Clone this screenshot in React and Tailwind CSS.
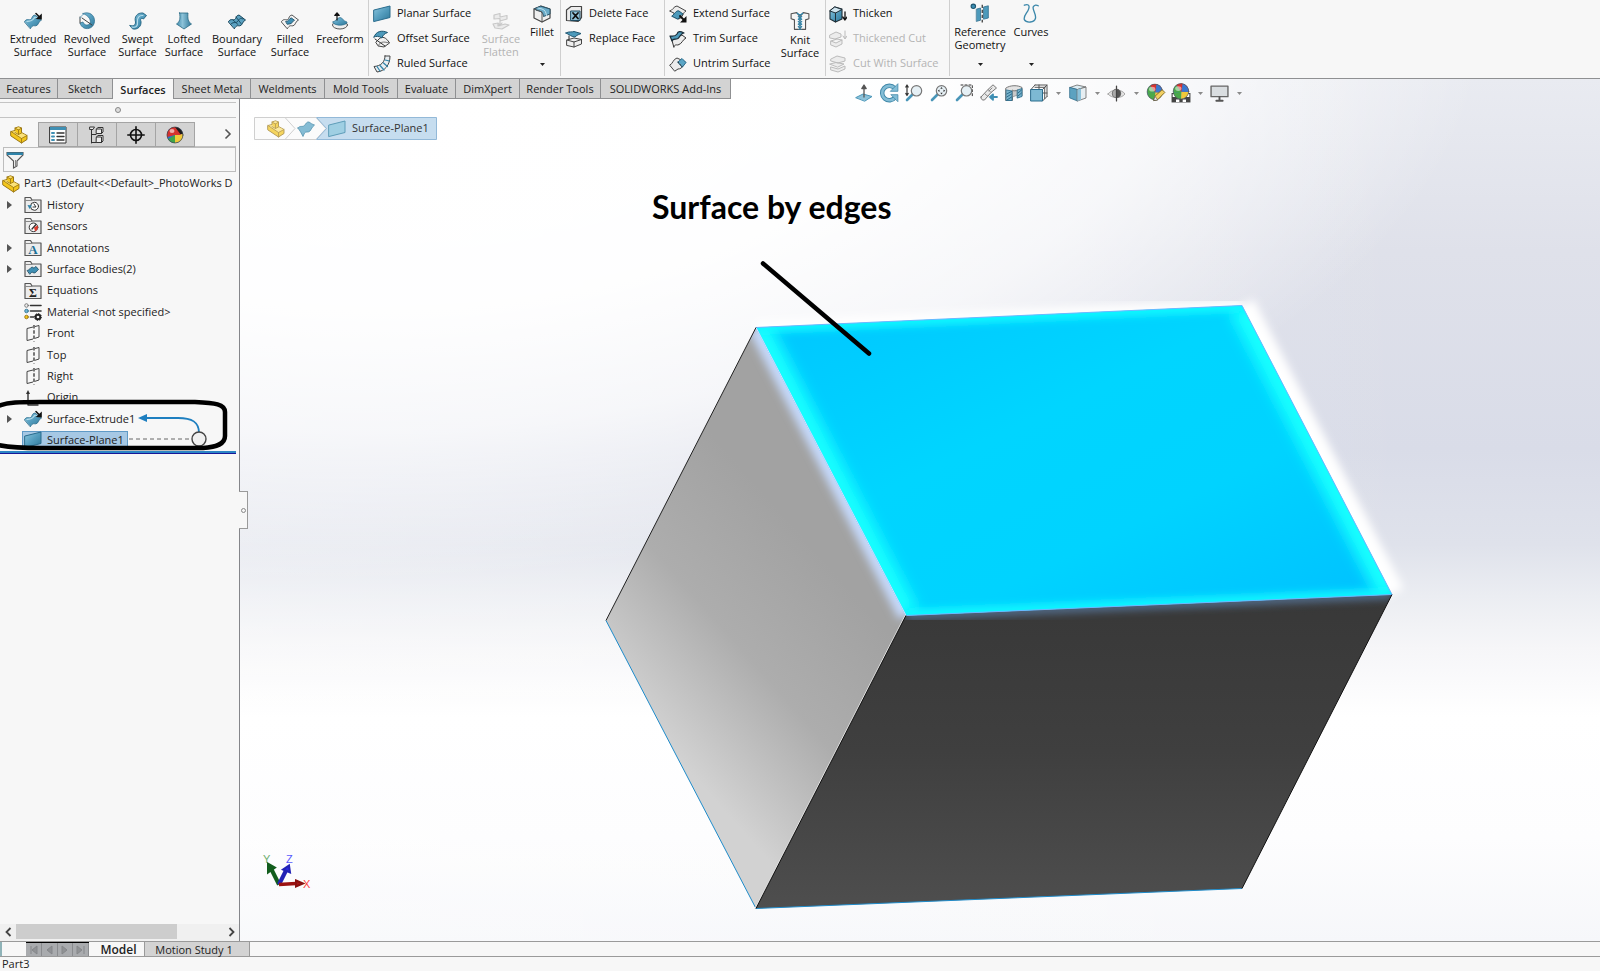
import React from "react";

const Svg = ({ s = 18, children, className = "" }) => (
  <svg
    viewBox="0 0 18 18"
    width={s}
    height={s}
    fill="none"
    strokeLinejoin="round"
    strokeLinecap="round"
    className={"shrink-0 " + className}
    aria-hidden="true"
  >
    {children}
  </svg>
);

const WAVE = "M0.500 9.500 C3 6 4.500 8.500 6.500 7.500 S8 3 11 3 L17.500 8 C14.500 9 14.500 13.500 12 13.800 S9 12.500 6.500 16.500 Z";

const ExtrudedIcon = ({ s }) => (
  <Svg s={s}>
    <path d={WAVE} fill="url(#blue)" stroke="#2a6c8d" strokeWidth="0.800" />
    <path d="M3 9.500 C5 8.500 7 10 9 7.500 S11 5 12.500 5.500" stroke="#b5dcea" strokeWidth="1.200" />
    <path d="M12 1.500 L15 4.500" stroke="#111" strokeWidth="1.600" />
    <path d="M17.800 1.500 V7.500 L11.800 7 Z" fill="#111" />
  </Svg>
);
const RevolvedIcon = () => (
  <Svg>
    <path d="M5 1.500 C11 -1 17 3 16.500 9.500 C16 15 11 18 6 16 C4 15 2.500 13 2 11 L5 10 C6 13 9 14 11.500 12 C14 9 11 3.500 5 1.500 Z" fill="url(#blue)" stroke="#2a6c8d" strokeWidth="0.700" />
    <path d="M2 11 V5 M4 6 L14 13" stroke="#444" strokeWidth="1" />
    <path d="M2 6 C3 4 4 3 6 2" stroke="#6ba3bf" />
  </Svg>
);
const SweptIcon = () => (
  <Svg>
    <path d="M1 13.500 C5 14.500 6.500 13 6.500 10 C5 5 8 0.500 14 1 L17.500 3.500 L14.500 7 C12 5.500 11 7 12 9.500 C12.500 14 9 18 4 17 Z" fill="url(#blue)" stroke="#1f617f" strokeWidth="0.900" />
    <path d="M3 15 C7 16 9 14 8.500 10 C8 6 10 3 14 3.500" stroke="#b5dcea" strokeWidth="1.100" />
  </Svg>
);
const LoftedIcon = () => (
  <Svg>
    <path d="M4.500 1 H13 C12.500 6 13 10 16.500 12 L9 17 L1.500 12 C5 10 5.500 6 4.500 1 Z" fill="url(#blueH)" stroke="#276883" strokeWidth="0.800" />
  </Svg>
);
const BoundaryIcon = () => (
  <Svg>
    <path d={WAVE} fill="#5ba1c0" stroke="#17465c" strokeWidth="1" />
    <path d="M3 12 C6 9 8 12 10 9 S12 6 15 7 M5 8 L10 12.500 M8 5 L13 11.500" stroke="#17465c" strokeWidth="0.900" />
  </Svg>
);
const FilledIcon = () => (
  <Svg>
    <path d={WAVE} fill="#f4f4f4" stroke="#555" strokeWidth="1" />
    <path d="M5 9.500 C8 9.500 8 6 10.500 6 L13.500 8.300 C11 9 11.500 11.800 9 11.800 L6.500 12.200 Z" fill="#3f8fb3" stroke="#1d5069" strokeWidth="0.900" />
  </Svg>
);
const FreeformIcon = () => (
  <Svg>
    <ellipse cx="9" cy="13" rx="7.500" ry="4" fill="#eee" stroke="#555" />
    <path d="M2 10 C5 9 6 6 9 5.500 C12 6 12 9 16 10 C16.500 14 2 14.500 2 10 Z" fill="url(#blue)" stroke="#2a6c8d" strokeWidth="0.700" />
    <path d="M6 8 V2 M3.800 3.500 L6 0.800 L8.200 3.500 Z" stroke="#111" strokeWidth="1.200" fill="#111" />
  </Svg>
);
const PlaneIcon = ({ s, light }) => (
  <Svg s={s}>
    <path d="M1 5 L17 1 V12.500 L1 16.500 Z" fill={light ? "#9fcfe3" : "url(#blue)"} stroke={light ? "#5e9db8" : "#2a6c8d"} strokeWidth="1" />
  </Svg>
);
const OffsetIcon = () => (
  <Svg>
    <path d="M3 12 L6 9 C9 6 13 7 16.500 13 L11 17 L5.500 16 Z" fill="#f2f2f2" stroke="#444" />
    <path d="M5.500 16 C6 12 10 11 16 13" stroke="#777" />
    <path d="M1 7 C3 1 9 0 14.500 2.500 C12 3.500 9.500 5 9 8 C6 6 3 6 1 7 Z" fill="#4d9abb" stroke="#1d5570" />
    <path d="M2 9 L12 16" stroke="#333" />
  </Svg>
);
const RuledIcon = () => (
  <Svg>
    <path d="M12 1 H17 C17 10 12 16 4 17 L1 11.500 C8 11 12 7 12 1 Z" fill="#e8eef2" stroke="#444" />
    <path d="M12 5 L16.500 6 M10.500 8 L14.500 11.500 M7 10.500 L11 15 M4 11.500 L7 16" stroke="#2f84aa" strokeWidth="1.200" />
  </Svg>
);
const FlattenIcon = () => (
  <Svg className="opacity-60">
    <path d="M2 3 L8 1.500 L8 5 L15 3.500 V7 L8 9 V6.500 L2 7 Z M1 12 L6 11 V14 L13 12 L17 13 L10 17 L3 16 Z M8 9 V13 M6 11 L8 13.500 L10 11" stroke="#aaa" strokeWidth="1.200" fill="#e4e4e4" />
  </Svg>
);
const FilletIcon = () => (
  <Svg>
    <path d="M1 4 L8 1 L17 4 V13 L9 17 L1 13 Z" fill="#efefef" stroke="#444" strokeWidth="1.200" />
    <path d="M8 1.300 L17 4 V9 L10.500 11.500 C10.500 8 8 6 4 5.500 L1.500 4 Z" fill="#69abc8" stroke="#2a5469" />
    <path d="M1 4 L9 7 V17" stroke="#555" />
    <path d="M5 3 L9 4 C12 5 13 7 13.500 10.500" stroke="#bfe0ed" />
  </Svg>
);
const DeleteFaceIcon = () => (
  <Svg>
    <path d="M1.500 5 L6 1.500 H16.500 V12.500 L13 16.500 L1.500 15.500 Z" fill="#ededed" stroke="#444" strokeWidth="1.200" />
    <path d="M6 6 H15 V15.500 H6 Z" fill="#93c2d7" stroke="#1e4a60" />
    <path d="M8 8 L13 13.500 M13 8 L8 13.500" stroke="#111" strokeWidth="1.800" />
  </Svg>
);
const ReplaceFaceIcon = () => (
  <Svg>
    <path d="M2 10 L9 8 L16.500 9.500 V14 L9 17 L2 15.500 Z" fill="#eee" stroke="#444" />
    <path d="M2 10 L9 12 L16.500 9.500 M9 12 V17" stroke="#444" />
    <path d="M1 3 C4 1 7 2.500 9 1.500 L16 3.500 C14 5 13 4 10 7 C7 7 4 4.500 1 3 Z" fill="#4d9abb" stroke="#1d5570" />
    <path d="M4 6 V9" stroke="#222" />
  </Svg>
);
const ExtendIcon = () => (
  <Svg>
    <path d="M1 6 C3 6 5 1 8 1 L17 6 C14 7 14 13 9.500 14 L4 11 L5 8.500 Z" fill="#ececec" stroke="#444" />
    <path d="M3 11 C6 9 7 5 10 6 L14 9 C11 10 11 13 9 14 Z" fill="#4d9abb" stroke="#1d5570" />
    <path d="M11 11 L14.500 14.500" stroke="#111" strokeWidth="1.800" />
    <path d="M17.500 11 V17.500 H11 Z" fill="#111" />
  </Svg>
);
const TrimIcon = () => (
  <Svg>
    <path d="M3 9 C9 10 10 5 13 5 L17 8 C14 9 13 14 9 15 C7 15 6 14 5 17 Z" fill="#ececec" stroke="#333" />
    <path d="M1 6 C4 6 6 7 8 4 C9 1 11 1 15 3 C12 3 11 7 9 8.500 C6 10 4 8 3 11 Z" fill="#4d9abb" stroke="#1b2d38" strokeWidth="1.200" />
  </Svg>
);
const UntrimIcon = () => (
  <Svg>
    <path d="M1 10 C4 9 4 4 8 3 L16.500 7 C14 9 14 14 9 14 L6 16 Z" fill="#ececec" stroke="#444" />
    <path d="M9 7 L13 3.500 L17 7.500 L13.500 12 Z" fill="#5ba6c6" stroke="#2a6c8d" />
    <path d="M9 7 L13.500 12" stroke="#333" strokeDasharray="1 1.500" />
  </Svg>
);
const KnitIcon = () => (
  <Svg s={20}>
    <path d="M1 2.500 L6 1.500 L9 5 V16.500 H4 V8 L1 7 Z M17 2.500 L12 1.500 L9 5 V16.500 H14 V8 L17 7 Z" fill="#f5f5f5" stroke="#555" />
    <path d="M6.500 2 L10.500 5 L7.500 7.500 L10.500 9.500 L7.500 12 L10.500 14 L8 16.500 M11.500 2 L7.500 5 L10.500 7.500 L7.500 9.500 L10.500 12 L7.500 14 L10 16.500" stroke="#2f84aa" strokeWidth="1.100" />
  </Svg>
);
const ThickenIcon = () => (
  <Svg>
    <path d="M1 6 L6 2 L13 4 V14 L6.500 17 L1 14 Z" fill="url(#blue)" stroke="#1f2f38" strokeWidth="1.100" />
    <path d="M1 6 L6.500 8 L13 4.500 L6 2 Z" fill="#cfe4ee" stroke="#1f2f38" />
    <path d="M6.500 8 V17" stroke="#1f2f38" />
    <path d="M16 7 V14 M13.800 12 L16 15 L18 12" stroke="#111" strokeWidth="1.300" />
  </Svg>
);
const ThickCutIcon = () => (
  <Svg>
    <path d="M1 5 L7 2 L12 4 V7 L6 9 L1 8 Z M2 11 L8 9 L13 10 V14 L7 17 L2 15 Z M2 11 L7 13 L13 10 M16 1 V8 M14 6 L16 9 L18 6" stroke="#bbb" fill="#ececec" />
  </Svg>
);
const CutWithIcon = () => (
  <Svg>
    <path d="M2 4 L8 1 L16 3 V6 L9 8 L2 6 Z M1 9 L7 7.500 L15 9 L9 12 Z M2 12 L9 14 L16 11 V14 L9 17 L2 15 Z" stroke="#bbb" fill="#ececec" />
  </Svg>
);
const RefGeomIcon = () => (
  <Svg s={20}>
    <circle cx="3" cy="3" r="2" fill="#3b8db2" stroke="#1d5570" />
    <path d="M6 5.500 L9.500 4.500 V15.500 L6 16.500 Z M12.500 3.500 L16.500 2.500 V13.500 L12.500 14.500 Z" fill="#4d9abb" stroke="#2a6c8d" strokeWidth="0.700" />
    <path d="M11 1.500 V17.500" stroke="#222" strokeDasharray="3 1.500" strokeLinecap="butt" />
  </Svg>
);
const CurvesIcon = () => (
  <Svg s={20}>
    <path d="M3 2 C6 1 8 1.500 7 5 C6 9 2 11 3 15 C5 18.500 12 17.500 13 14 C14 10 10 6 11 3.500 C12 1.500 14 1.500 15.500 2.500" stroke="#3b87aa" strokeWidth="1.200" />
  </Svg>
);

const PartIcon = ({ s = 18, light }) => (
  <Svg s={s} className={light ? "opacity-70" : ""}>
    <path d="M1 5.500 L5 4.500 V2 L8.500 0.800 L11.500 2 V6.500 L17 9.500 V13.500 L11.500 17 L1 10 Z" fill="#f3c61d" stroke="#8f6b0b" strokeWidth="0.900" />
    <path d="M1.500 6 L5 5 L8.500 8.200 L11.500 7 L16.500 9.500 L11.500 12.500 Z M5.500 2.300 L8.500 1.300 L11 2.300 L8.500 3.500 Z" fill="#fbe27a" />
    <path d="M5 2 L8.500 4 L11.500 2 M8.500 4 V8.500 L5 6.500 M8.500 8.500 L11.500 7 M1 5.500 L11.500 12.500 L17 9.500 M11.500 12.500 V17" stroke="#a27c12" strokeWidth="0.900" />
  </Svg>
);

const Glass = () => (
  <>
    <path d="M7.500 10.500 L2 16" stroke="#4a96b8" strokeWidth="2.600" />
    <circle cx="11.500" cy="6.800" r="5.200" fill="#e6f0f5" stroke="#777" strokeWidth="1.200" />
  </>
);
const NormalToIcon = () => (
  <Svg>
    <path d="M1 13.500 L8 10 L17 12.500 L10 17 Z" fill="#8cc2da" stroke="#4a96b8" />
    <path d="M9 13 V3 M6.800 4.500 L9 1 L11.200 4.500 Z" stroke="#555" strokeWidth="1.300" fill="#555" />
  </Svg>
);
const RotateIcon = () => (
  <Svg s={20}>
    <path d="M14 4.500 A6.500 6.500 0 1 0 14.500 13" stroke="#3f87a8" strokeWidth="4" strokeLinecap="butt" />
    <path d="M14 4.500 A6.500 6.500 0 1 0 14.500 13" stroke="#83bdd6" strokeWidth="2.400" strokeLinecap="butt" />
    <path d="M17 1 V7.500 H10.500 Z M17 16.500 V10.500 H11 Z" fill="#83bdd6" stroke="#3f87a8" strokeWidth="0.700" />
  </Svg>
);
const ZoomUpDownIcon = () => (
  <Svg>
    <Glass />
    <path d="M2 1.500 V11 M0.800 3 L2 1 L3.200 3 M0.800 9.500 L2 11.500 L3.200 9.500" stroke="#333" strokeWidth="1.200" />
  </Svg>
);
const ZoomFitIcon = () => (
  <Svg>
    <Glass />
    <path d="M11.500 3 L10.300 4.800 H12.700 Z M11.500 10.600 L10.300 8.800 H12.700 Z M7.700 6.800 L9.500 5.600 V8 Z M15.300 6.800 L13.500 5.600 V8 Z" fill="#333" />
  </Svg>
);
const ZoomAreaIcon = () => (
  <Svg>
    <path d="M6 1 H17.300 V12" stroke="#333" strokeDasharray="2 2" />
    <Glass />
  </Svg>
);
const PrevViewIcon = () => (
  <Svg>
    <path d="M1 13 L8 5.500 L13 0.800 L16.500 4 L11 8.500 L4.500 16 C2 16.500 0.800 15 1 13 Z" fill="#e9e9e9" stroke="#777" />
    <path d="M8 5.500 L11 8.500 M4.500 9.500 L8 12.500 M12 4 L9 7" stroke="#888" />
    <path d="M17 13 H13 M13 10.500 L10 13 L13 15.800 Z" fill="#3f8fb3" stroke="#3f8fb3" strokeWidth="1.800" />
  </Svg>
);
const SectionIcon = () => (
  <Svg>
    <path d="M1 4 C5 1 13 1 17 3.500 V12 L12.500 13.500 V6 C11 7 8 7 7.500 6 V16.500 H1 Z" fill="#e3e3e3" stroke="#777" />
    <path d="M7.500 6.500 C9 7.500 11 7.500 12.500 6 V11 L7.500 13 Z" fill="#c9c9c9" stroke="#888" strokeWidth="0.700" />
    <path d="M1.500 6 L7 7 V16.500 H1.500 Z M12.500 6 L17 4.500 V12.500 L12.500 14 Z" fill="#79b3cc" stroke="#2a6c8d" strokeWidth="0.800" />
    <path d="M1.800 10 L6.500 7.500 M1.800 13 L6.500 10 M2 16 L6.500 13 M13 9 L16.500 6 M13 12 L16.500 9" stroke="#2a6c8d" />
  </Svg>
);
const OrientIcon = () => (
  <Svg>
    <path d="M5 1 H17 V12.500 M1 5.500 L5 1 M12.500 5.500 L17 1 M9 1 V5 M12.500 9 H17 M12.500 17 L17 12.500 M14.700 3.300 V14.500 M5 3.300 H15" stroke="#555" />
    <path d="M1 5.500 H12.500 V17 H1 Z" fill="#7db9d3" stroke="#2a6c8d" />
  </Svg>
);
const DisplayIcon = () => (
  <Svg>
    <path d="M1 3.500 L8 1 L17 3 L8.500 5.500 Z" fill="#dcecf3" stroke="#666" strokeWidth="0.800" />
    <path d="M1 3.500 L8.500 5.500 V17 L1 14 Z" fill="#5ca2c0" stroke="#2a6c8d" strokeWidth="0.800" />
    <path d="M8.500 5.500 L17 3 V14 L8.500 17 Z" fill="#e6eef2" stroke="#666" strokeWidth="0.800" />
    <path d="M8.500 5.500 L12 4.500 V15.700 L8.500 17 Z" fill="#8cc2da" />
  </Svg>
);
const HideShowIcon = () => (
  <Svg s={19}>
    <path d="M1 9.500 C4 4.500 14 4.500 17 9.500 C14 14 4 14 1 9.500 Z" fill="#e2e2e2" stroke="#999" strokeWidth="0.800" />
    <circle cx="9" cy="9" r="4" fill="#aaa" stroke="#777" />
    <path d="M9 5 A4 4 0 0 1 9 13 Z" fill="#555" />
    <path d="M9 2 V16" stroke="#444" strokeWidth="1.200" />
  </Svg>
);
const Ball = ({ cx = 8, cy = 8, r = 7 }) => (
  <g transform={`translate(${cx} ${cy}) scale(${r})`}>
    <circle r="1" fill="#3a78cf" />
    <path d="M0.050 0.050 L0 -1 A1 1 0 0 1 0.990 0.100 Z" fill="#d6322e" />
    <path d="M0.050 0.050 L-0.950 0.200 A1 1 0 0 0 0 1 Z" fill="#4aa94a" />
    <path d="M0.050 0.050 L0.990 0.100 A1 1 0 0 1 0 1 Z" fill="#f0c93a" />
    <path d="M0.050 0.050 L-0.950 0.200 A1 1 0 0 1 -0.600 -0.800 Z" fill="#4aa94a" />
    <path d="M0.050 0.050 L-0.600 -0.800 A1 1 0 0 1 0.700 -0.710 Z" fill="#d6322e" />
    <path d="M0.050 0.050 L0.200 -0.970 A1 1 0 0 1 0.990 0.100 Z" fill="#3a78cf" />
    <ellipse cx="-0.350" cy="-0.350" rx="0.400" ry="0.300" fill="#fff" opacity="0.500" />
    <circle r="1" stroke="#555" strokeWidth="0.080" />
  </g>
);
const AppearIcon = () => (
  <Svg s={20}>
    <Ball />
    <path d="M7 15.500 L8 12 L14.500 6 L17 8.500 L10.500 15 Z" fill="#f1cf62" stroke="#7a6420" strokeWidth="0.800" />
    <path d="M7 15.500 L8 12 L10.500 15 Z" fill="#eee" stroke="#555" strokeWidth="0.600" />
  </Svg>
);
const SceneIcon = () => (
  <Svg s={20}>
    <path d="M0.500 9 H17.500 V17.500 H0.500 Z" fill="#444" />
    <path d="M1.500 10 h3 v2.500 h-3 Z M13.500 10 h3 v2.500 h-3 Z M4.500 14.800 h3 v2.200 h-3 Z M10.500 14.800 h3 v2.200 h-3 Z" fill="#fff" />
    <Ball cx={9} cy={7.5} r={7} />
  </Svg>
);
const MonitorIcon = () => (
  <Svg s={19}>
    <path d="M1 2 H17 V12 H1 Z" fill="#d9dde0" stroke="#666" strokeWidth="1.300" />
    <path d="M9 12.500 V15.500 M6 15.800 H12" stroke="#555" strokeWidth="1.800" />
  </Svg>
);

const Folder = ({ children }) => (
  <Svg>
    <path d="M1 16.500 V1.500 H6.500 L8 4 H17 V16.500 Z" fill="#ececec" stroke="#555" strokeWidth="1.200" />
    <path d="M1 4.500 H8" stroke="#888" />
    {children}
  </Svg>
);
const HistoryIcon = () => (
  <Folder>
    <circle cx="10.500" cy="10.300" r="4" stroke="#333" fill="#fff" />
    <path d="M10 8 L12 11 H9" stroke="#333" />
    <path d="M3.500 9 L8 9.500 L5.500 13 Z" fill="#2f84aa" />
  </Folder>
);
const SensorIcon = () => (
  <Folder>
    <circle cx="9.500" cy="10.300" r="4.300" stroke="#333" fill="#fff" />
    <path d="M11 14.300 A4.300 4.300 0 0 0 13.500 8.500 L10 10.500 Z" fill="#e03a2d" />
    <path d="M8 12 L12 7.500" stroke="#333" strokeWidth="1.300" />
  </Folder>
);
const GlyphFolder = ({ g, cls }) => (
  <Folder>
    <text x="9" y="15" textAnchor="middle" className={cls}>{g}</text>
  </Folder>
);
const SurfFolderIcon = () => (
  <Folder>
    <path d="M3.500 10.500 C6 10 6.500 7 8.500 7 C10 9.500 11 6.500 12 6.500 L14.500 9.500 C12.500 11 12 13 10 13 C8 11.500 7 12.500 6 14 Z" fill="#3f8fb3" stroke="#1d5069" strokeWidth="0.900" />
  </Folder>
);
const MaterialIcon = () => (
  <Svg>
    <path d="M6.500 2.500 H17 M6.500 8 H17 M6.500 14 H10" stroke="#333" strokeWidth="1.600" />
    <circle cx="2.500" cy="2.500" r="1.800" fill="#eee" stroke="#666" strokeWidth="0.800" />
    <circle cx="2.500" cy="8" r="1.800" fill="#6fb7d6" stroke="#2a6c8d" strokeWidth="0.800" />
    <circle cx="2.500" cy="14" r="1.800" fill="#f3c61d" stroke="#8f6b0b" strokeWidth="0.800" />
    <circle cx="14" cy="14" r="2.300" stroke="#222" strokeWidth="1.900" />
    <circle cx="14" cy="14" r="3.500" stroke="#222" strokeWidth="1" strokeDasharray="1.300 1.400" strokeLinecap="butt" />
  </Svg>
);
const RefPlaneIcon = () => (
  <Svg>
    <path d="M9 3 L3 4.500 V16.500 L9 15 M11 2.500 L15 1.500 V13 L11 14.300" stroke="#444" strokeLinecap="butt" />
    <path d="M10 1 V17.500" stroke="#222" strokeWidth="1.200" strokeDasharray="3.500 1.800" strokeLinecap="butt" />
  </Svg>
);
const OriginIcon = () => (
  <Svg>
    <path d="M4 16 V4 M4 16 H14" stroke="#333" strokeWidth="1.400" />
    <path d="M2 5 L4 1 L6 5 Z" fill="#333" />
  </Svg>
);

const bigGroup1 = [
  ["Extruded Surface", ExtrudedIcon, "w-[54px]"],
  ["Revolved Surface", RevolvedIcon, "w-[54px]"],
  ["Swept Surface", SweptIcon, "w-[47px]"],
  ["Lofted Surface", LoftedIcon, "w-[46px]"],
  ["Boundary Surface", BoundaryIcon, "w-[60px]"],
  ["Filled Surface", FilledIcon, "w-[46px]"],
  ["Freeform", FreeformIcon, "w-[54px]"],
];

const Caret = () => (
  <svg width="5" height="3" viewBox="0 0 5 3" className="block" aria-hidden="true">
    <path d="M0 0 H5 L2.500 3 Z" fill="currentColor" />
  </svg>
);

const Big = ({ label, Icon, w, disabled, pad = "pt-3", caret }) => (
  <button
    type="button"
    disabled={disabled}
    className={`flex shrink-0 flex-col items-center pb-3 ${pad} ${w} ${disabled ? "text-[#b4b4b4]" : "text-[#111]"}`}
  >
    <Icon />
    <span className="mt-0.5 flex flex-col leading-[13px]">
      {label.split(" ").map((t) => (
        <span key={t}>{t}</span>
      ))}
    </span>
    {caret && (
      <span className="mt-auto text-[#222]">
        <Caret />
      </span>
    )}
  </button>
);

const Stack = ({ items, w }) => (
  <div className={`flex shrink-0 flex-col pt-px ${w}`}>
    {items.map(([label, Icon, disabled]) => (
      <button
        type="button"
        key={label}
        disabled={disabled}
        className={`flex h-[25px] items-center gap-1.5 whitespace-nowrap ${disabled ? "text-[#b4b4b4]" : "text-[#111]"}`}
      >
        <Icon />
        {label}
      </button>
    ))}
  </div>
);

const Sep = () => <div className="h-[76px] w-px shrink-0 bg-[#cfcfcf]" />;

const cmdTabs = [
  ["Features", "w-[58px]"],
  ["Sketch", "w-[55px]"],
  ["Surfaces", "w-[61px]"],
  ["Sheet Metal", "w-[77px]"],
  ["Weldments", "w-[74px]"],
  ["Mold Tools", "w-[73px]"],
  ["Evaluate", "w-[58px]"],
  ["DimXpert", "w-[64px]"],
  ["Render Tools", "w-[81px]"],
  ["SOLIDWORKS Add-Ins", "w-[130px]"],
];

const viewTools = [
  ["Normal To", NormalToIcon],
  ["Rotate", RotateIcon],
  ["Zoom In/Out", ZoomUpDownIcon],
  ["Zoom to Fit", ZoomFitIcon],
  ["Zoom to Area", ZoomAreaIcon],
  ["Previous View", PrevViewIcon],
  ["Section View", SectionIcon],
  ["View Orientation", OrientIcon, true],
  ["Display Style", DisplayIcon, true],
  ["Hide/Show Items", HideShowIcon, true],
  ["Edit Appearance", AppearIcon],
  ["Apply Scene", SceneIcon, true],
  ["View Settings", MonitorIcon, true],
];

const panelTabs = [
  ["Feature tree", () => <PartIcon s={18} />],
  ["Properties", () => (
    <Svg s={18}>
      <path d="M1 1 H17 V17 H1 Z" fill="#fff" stroke="#333" />
      <path d="M1 1 H17 V4 H1 Z" fill="#3f8fb3" />
      <path d="M3 7 H5 M3 10.500 H5 M3 14 H5" stroke="#3f8fb3" strokeWidth="2" />
      <path d="M8 7 H15 M8 10.500 H15 M8 14 H15" stroke="#333" strokeWidth="1.300" />
    </Svg>
  )],
  ["Configurations", () => (
    <Svg s={18}>
      <path d="M3.500 3.500 V17 M3.500 16.500 H8 M3.500 8.500 H8" stroke="#333" />
      <path d="M2 1 H6.500 L5 3.500 H2 Z M8.500 3 L10 1.500 H15 V6 L13.500 7.500 H8.500 Z M8.500 3 H13.500 V7.500 M8.500 11 L10 9.500 H15 V15 L13.500 16.500 H8.500 Z M8.500 11 H13.500 V16.500" fill="#eee" stroke="#333" />
    </Svg>
  )],
  ["Dimensions", () => (
    <Svg s={18}>
      <circle cx="9" cy="9" r="5.500" stroke="#111" strokeWidth="1.600" />
      <path d="M9 0.800 V17.200 M0.800 9 H17.200" stroke="#111" strokeWidth="1.600" />
    </Svg>
  )],
  ["Display manager", () => (
    <Svg s={18}>
      <circle cx="9" cy="9" r="8" fill="#2f6fd0" />
      <path d="M9 9 L1.200 11 A8 8 0 0 1 9 1 Z" fill="#d6322e" />
      <path d="M9 9 L9 1 A8 8 0 0 1 17 8 Z" fill="#1c1c1c" />
      <path d="M9 9 L17 8 A8 8 0 0 1 9 17 Z" fill="#f0c93a" />
      <path d="M9 9 L9 17 A8 8 0 0 1 2 13 Z" fill="#3fa54a" />
      <path d="M9 1 L15 9 L9 9 Z" fill="#d6322e" />
      <ellipse cx="6" cy="5" rx="2.500" ry="2" fill="#fff" opacity="0.600" />
      <circle cx="9" cy="9" r="8" stroke="#444" strokeWidth="0.700" />
    </Svg>
  )],
];

const tree = [
  ["History", HistoryIcon, true],
  ["Sensors", SensorIcon],
  ["Annotations", () => <GlyphFolder g="A" cls="fill-[#1c6f96] font-['Liberation_Serif',serif] text-[13px] font-bold" />, true],
  ["Surface Bodies(2)", SurfFolderIcon, true],
  ["Equations", () => <GlyphFolder g="Σ" cls="fill-[#222] font-['Liberation_Serif',serif] text-[12px] font-bold" />],
  ["Material <not specified>", MaterialIcon],
  ["Front", RefPlaneIcon],
  ["Top", RefPlaneIcon],
  ["Right", RefPlaneIcon],
  ["Origin", OriginIcon],
  ["Surface-Extrude1", ExtrudedIcon, true],
  ["Surface-Plane1", PlaneIcon, false, true],
];

const Scene = () => (
  <svg
    viewBox="0 0 1600 863"
    preserveAspectRatio="xMidYMid slice"
    className="absolute inset-0 h-full w-full"
    role="img"
    aria-label="Box model with highlighted surface"
  >
    <defs>
      <linearGradient id="blue" x1="0" y1="0" x2="1" y2="1">
        <stop offset="0" stopColor="#8cc6de" />
        <stop offset="0.500" stopColor="#549dbe" />
        <stop offset="1" stopColor="#2f7899" />
      </linearGradient>
      <linearGradient id="blueH" x1="0" y1="0" x2="1" y2="0">
        <stop offset="0" stopColor="#3f8bad" />
        <stop offset="0.400" stopColor="#8cc2d8" />
        <stop offset="1" stopColor="#2f7899" />
      </linearGradient>
      <linearGradient id="sky" x1="0" y1="0" x2="0" y2="1">
        <stop offset="0" stopColor="#e9ebf1" />
        <stop offset="0.200" stopColor="#dfe1ea" />
        <stop offset="0.430" stopColor="#d9dce8" />
        <stop offset="0.540" stopColor="#dfe2eb" />
        <stop offset="0.600" stopColor="#ebedf2" />
        <stop offset="0.660" stopColor="#f6f6f8" />
        <stop offset="0.740" stopColor="#ffffff" />
        <stop offset="0.880" stopColor="#fdfdfe" />
        <stop offset="1" stopColor="#f6f7fa" />
      </linearGradient>
      <linearGradient id="fade" x1="0" y1="0" x2="1" y2="0">
        <stop offset="0.150" stopColor="#fff" stopOpacity="0.300" />
        <stop offset="0.900" stopColor="#fff" stopOpacity="0" />
      </linearGradient>
      <radialGradient id="glowTL" gradientUnits="userSpaceOnUse" cx="0" cy="0" r="1" gradientTransform="translate(440 0) rotate(-4) scale(1050 500)">
        <stop offset="0" stopColor="#fff" />
        <stop offset="0.450" stopColor="#fff" stopOpacity="0.970" />
        <stop offset="0.700" stopColor="#fff" stopOpacity="0.700" />
        <stop offset="1" stopColor="#fff" stopOpacity="0" />
      </radialGradient>
      <linearGradient id="leftFace" gradientUnits="userSpaceOnUse" x1="840" y1="500" x2="660" y2="660">
        <stop offset="0" stopColor="#a2a2a2" />
        <stop offset="0.500" stopColor="#adadad" />
        <stop offset="1" stopColor="#d2d2d2" />
      </linearGradient>
      <linearGradient id="dark" x1="0" y1="0" x2="0" y2="1">
        <stop offset="0" stopColor="#383838" />
        <stop offset="0.500" stopColor="#3f3f3f" />
        <stop offset="1" stopColor="#4e4e4e" />
      </linearGradient>
      <linearGradient id="top" x1="0" y1="0" x2="1" y2="1">
        <stop offset="0" stopColor="#00c6ff" />
        <stop offset="0.400" stopColor="#00d5ff" />
        <stop offset="0.650" stopColor="#00d3ff" />
        <stop offset="1" stopColor="#00bfff" />
      </linearGradient>
      <filter id="b6" x="-20%" y="-20%" width="140%" height="140%"><feGaussianBlur stdDeviation="7" /></filter>
      <filter id="b4" x="-20%" y="-20%" width="140%" height="140%"><feGaussianBlur stdDeviation="4" /></filter>
      <clipPath id="topClip"><path d="M756 249 L1242 227 L1392 516 L906 537 Z" /></clipPath>
      <clipPath id="leftClip"><path d="M756 249 L906 537 L756 830 L606 542 Z" /></clipPath>
      <clipPath id="darkClip"><path d="M906 537 L1392 516 L1242 810 L756 830 Z" /></clipPath>
    </defs>
    <rect width="1600" height="863" fill="#fff" />
    <rect width="1600" height="863" fill="url(#sky)" />
    <rect width="1600" height="863" fill="url(#fade)" />
    <rect width="1600" height="863" fill="url(#glowTL)" />

    <path d="M756 249 L1242 227" stroke="#fff" strokeWidth="12" fill="none" filter="url(#b4)" />
    <path d="M1242 227 L1392 516" stroke="#fff" strokeWidth="26" fill="none" filter="url(#b4)" />

    <path d="M756 249 L906 537 L756 830 L606 542 Z" fill="url(#leftFace)" />
    <g clipPath="url(#leftClip)">
      <path d="M756 249 L906 537" stroke="#c5d9fb" strokeWidth="16" filter="url(#b4)" />
    </g>
    <path d="M906 537 L1392 516 L1242 810 L756 830 Z" fill="url(#dark)" />
    <g clipPath="url(#darkClip)">
      <path d="M906 537 L1392 516" stroke="#5a7ba3" strokeWidth="7" filter="url(#b4)" />
    </g>

    <path d="M756 249 L1242 227 L1392 516 L906 537 Z" fill="url(#top)" />
    <g clipPath="url(#topClip)">
      <path d="M756 249 L906 537 M1242 227 L1392 516" stroke="#14ffff" strokeWidth="28" filter="url(#b6)" />
      <path d="M756 249 L1242 227 M1392 516 L906 537" stroke="#14ffff" strokeWidth="10" filter="url(#b4)" />
    </g>
    <path d="M756 249 L1242 227 L1392 516 L906 537 Z" fill="none" stroke="#6ab8ff" strokeWidth="1" />
    <path d="M756 249 L906 537" stroke="#c8e4ff" />
    <path d="M756 249 L606 542" stroke="#222" />
    <path d="M606 542 L756 830 L1242 810" stroke="#1e8bca" fill="none" />
    <path d="M1392 516 L1242 810" stroke="#111" />
    <path d="M905 537 L755 830" stroke="#ddd" />
    <path d="M906 537 L756 830" stroke="#111" />

    <path d="M763 185 L869 275" stroke="#000" strokeWidth="4.500" strokeLinecap="round" />

    <path d="M279 806 L271 790" stroke="#125d1d" strokeWidth="4" />
    <path d="M268 785 L275 789 L268 794 Z" fill="#125d1d" stroke="#125d1d" strokeWidth="2" />
    <path d="M279 806 L286 792" stroke="#2222b5" strokeWidth="4" />
    <path d="M289 787 L290 794 L283 791 Z" fill="#2a2ae0" stroke="#2222b5" strokeWidth="2" />
    <path d="M279 806 L296 805" stroke="#9c1212" strokeWidth="3.500" />
    <path d="M296 802 L303 805 L296 808 Z" fill="#a81515" stroke="#8a1010" strokeWidth="2" />
    <g className="font-['Liberation_Sans',sans-serif] text-[11px]">
      <text x="263" y="784" className="fill-[#6fae6f]">Y</text>
      <text x="286" y="784" className="fill-[#5a5aff]">Z</text>
      <text x="303" y="809" className="fill-[#ff4040]">X</text>
    </g>
  </svg>
);

export default function App() {
  return (
    <div className="flex h-screen w-full flex-col overflow-hidden bg-[#f7f7f7] font-['Open_Sans','Noto_Sans',sans-serif] text-[11px] text-[#222]">
      <header className="flex h-[79px] shrink-0 overflow-hidden border-b border-[#8f9092]">
        <div className="flex w-[368px] shrink-0 pl-1.5">
          {bigGroup1.map(([label, Icon, w]) => (
            <Big key={label} label={label} Icon={Icon} w={w} />
          ))}
        </div>
        <Sep />
        <div className="flex w-[191px] shrink-0 pl-1">
          <Stack
            w="w-[105px]"
            items={[["Planar Surface", PlaneIcon], ["Offset Surface", OffsetIcon], ["Ruled Surface", RuledIcon]]}
          />
          <Big label="Surface Flatten" Icon={FlattenIcon} w="w-[46px]" disabled />
          <Big label="Fillet" Icon={FilletIcon} w="w-[36px]" pad="pt-[5px]" caret />
        </div>
        <Sep />
        <div className="w-[103px] shrink-0 pl-1">
          <Stack w="w-full" items={[["Delete Face", DeleteFaceIcon], ["Replace Face", ReplaceFaceIcon]]} />
        </div>
        <Sep />
        <div className="flex w-[160px] shrink-0 pl-1">
          <Stack
            w="w-[107px]"
            items={[["Extend Surface", ExtendIcon], ["Trim Surface", TrimIcon], ["Untrim Surface", UntrimIcon]]}
          />
          <Big label="Knit Surface" Icon={KnitIcon} w="w-[48px]" pad="pt-[11px]" />
        </div>
        <Sep />
        <div className="w-[123px] shrink-0 pl-[3px]">
          <Stack
            w="w-full"
            items={[["Thicken", ThickenIcon], ["Thickened Cut", ThickCutIcon, true], ["Cut With Surface", CutWithIcon, true]]}
          />
        </div>
        <Sep />
        <div className="flex shrink-0 pl-[3px]">
          <Big label="Reference Geometry" Icon={RefGeomIcon} w="w-[54px]" pad="pt-[3px]" caret />
          <Big label="Curves" Icon={CurvesIcon} w="w-[48px]" pad="pt-[3px]" caret />
        </div>
      </header>

      <main className="relative flex min-h-0 flex-1 flex-col">
        <Scene />
        <div className="relative flex h-5 shrink-0">
          <nav className="flex h-full shrink-0">
            {cmdTabs.map(([label, w]) => (
              <button
                type="button"
                key={label}
                className={`shrink-0 whitespace-nowrap border-r border-[#8f9092] pt-px text-center leading-[18px] text-[#222] ${w} ${
                  label === "Surfaces" ? "bg-[#f7f7f7] font-semibold" : "border-b bg-[#d3d3d3]"
                }`}
              >
                {label}
              </button>
            ))}
          </nav>
          <div className="ml-[120px] flex h-7 shrink-0 items-center">
            {viewTools.map(([label, Icon, drop]) => (
              <React.Fragment key={label}>
                <button type="button" aria-label={label} className="flex w-[25px] justify-center">
                  <Icon />
                </button>
                {drop && (
                  <button type="button" aria-label={label + " options"} className="flex h-6 w-3.5 items-center justify-center text-[#8a8a8a]">
                    <Caret />
                  </button>
                )}
              </React.Fragment>
            ))}
          </div>
        </div>

        <div className="relative flex min-h-0 flex-1">
          <aside className="relative flex w-60 shrink-0 flex-col border-r border-[#85868a] bg-[#f7f7f7] pt-[3px]">
            <div className="mr-[3px] flex h-4 items-center justify-center border-y border-[#c4c4c4]">
              <span className="size-1.5 rounded-full border border-[#888] bg-[#ddd]" />
            </div>
            <div className="mr-[3px] mt-1 flex h-[25px] items-stretch">
              {panelTabs.map(([label, Icon], i) => (
                <button
                  type="button"
                  key={label}
                  aria-label={label}
                  className={`flex w-[39px] items-center justify-center ${
                    i ? "border-y border-r border-[#a4a4a4] bg-[#d3d3d3]" : "border-r border-[#a4a4a4]"
                  }`}
                >
                  <Icon />
                </button>
              ))}
              <button type="button" aria-label="More tabs" className="flex flex-1 items-center justify-end border-b border-[#c4c4c4] pr-1">
                <svg width="8" height="12" viewBox="0 0 8 12" fill="none" aria-hidden="true">
                  <path d="M1.500 1.500 L6 6 L1.500 10.500" stroke="#555" strokeWidth="1.600" />
                </svg>
              </button>
            </div>
            <div className="relative mx-[3px] h-[25px] border border-[#bdbdbd]">
              <input aria-label="Filter tree" className="h-full w-full bg-transparent pl-6 outline-none" />
              <svg width="18" height="18" viewBox="0 0 18 18" className="pointer-events-none absolute left-0.5 top-[3px]" aria-hidden="true">
                <path d="M1 1.500 H17 V4 L11 10 V15 L7.500 17 V10 L1 4 Z" fill="#f2f2f2" stroke="#555" strokeWidth="1.100" />
                <path d="M1 1.500 H17 V4 H1 Z" fill="#2f84aa" />
                <path d="M9.500 9 V15.500" stroke="#888" />
              </svg>
            </div>
            <ul className="grid h-[279px] shrink-0 auto-rows-fr overflow-hidden whitespace-nowrap pt-px">
              <li className="mr-[3px] flex items-center gap-1 overflow-hidden pl-0.5">
                <PartIcon s={18} />
                <span className="whitespace-pre">{"Part3  (Default<<Default>_PhotoWorks D"}</span>
              </li>
              {tree.map(([label, Icon, expand, sel]) => (
                <li key={label} className="flex items-center pl-[7px]">
                  <span className="w-[15px]">
                    {expand && (
                      <svg width="5" height="8" viewBox="0 0 5 8" className="block" aria-hidden="true">
                        <path d="M0 0 L5 4 L0 8 Z" fill="#555" />
                      </svg>
                    )}
                  </span>
                  <span
                    className={`flex h-[19px] items-center gap-[5px] border pl-px pr-[3px] ${
                      sel ? "border-[#5f9ac6] bg-[#a6c8e4]" : "border-transparent"
                    }`}
                  >
                    <Icon s={18} />
                    {label}
                  </span>
                </li>
              ))}
            </ul>
            <div className="mr-[3px] h-[3px] shrink-0 border-b border-[#17179a] bg-[#2c86c4]" />
            <svg
              width="240"
              height="70"
              viewBox="0 0 240 70"
              fill="none"
              className="pointer-events-none absolute left-0 top-[291px]"
              aria-hidden="true"
            >
              <path d="M145 28 H178 C192 28 199 32 199 43" stroke="#1e7fc0" strokeWidth="1.800" />
              <path d="M138 28 L147 24 V32 Z" fill="#1e7fc0" />
              <path d="M129 49 H192" stroke="#666" strokeDasharray="4 3" />
              <circle cx="199" cy="49" r="7" fill="#f0f0f0" stroke="#444" strokeWidth="1.400" />
              <path d="M-2 16 C8 12 20 12 40 12 H195 C215 13 225 14 225 22 V46 C225 54 217 57 203 58 H40 C20 58 8 57 -2 55" stroke="#000" strokeWidth="4.500" />
            </svg>
            <div className="mt-auto flex h-[17px] shrink-0 items-center bg-[#f0f0f0] pb-0.5">
              <button type="button" aria-label="Scroll left" className="flex w-4 justify-center">
                <svg width="7" height="10" viewBox="0 0 7 10" fill="none" aria-hidden="true">
                  <path d="M5.500 1 L1.500 5 L5.500 9" stroke="#444" strokeWidth="1.800" />
                </svg>
              </button>
              <div className="h-full flex-1">
                <div className="h-full w-[161px] bg-[#cdcdcd]" />
              </div>
              <button type="button" aria-label="Scroll right" className="flex w-4 justify-center">
                <svg width="7" height="10" viewBox="0 0 7 10" fill="none" aria-hidden="true">
                  <path d="M1.500 1 L5.500 5 L1.500 9" stroke="#444" strokeWidth="1.800" />
                </svg>
              </button>
            </div>
            <button
              type="button"
              aria-label="Collapse panel"
              className="absolute -right-[9px] top-[392px] flex h-[38px] w-[9px] items-center justify-center border-y border-r border-[#9a9a9a] bg-[#f7f7f7]"
            >
              <span className="size-[5px] rounded-full border border-[#888]" />
            </button>
          </aside>

          <section className="relative min-w-0 flex-1">
            <div className="ml-3.5 mt-[18px] flex h-[23px] w-[183px] items-center bg-[#fbfbfb]">
              <svg width="183" height="23" viewBox="0 0 183 23" fill="none" className="absolute" aria-hidden="true">
                <path d="M0.500 0.500 H62 L72 11.500 L62 22.500 H0.500 Z" stroke="#cfcfcf" fill="#fbfbfb" />
                <path d="M31 0.500 L41 11.500 L31 22.500" stroke="#cfcfcf" />
                <path d="M62.500 0.500 H182.500 V22.500 H62.500 L72.500 11.500 Z" fill="#c6ddef" stroke="#93b9d8" />
              </svg>
              <a href="#part" aria-label="Part" className="relative ml-[13px] w-[30px]"><PartIcon s={18} light /></a>
              <a href="#surface" aria-label="Surface" className="relative w-[31px]">
                <Svg s={18}>
                  <path d="M1 8 C3 5 5 7.500 7.500 5.500 C9 3.500 10 1.500 12 2 C13.500 3 15.500 4.500 17.500 5 C15 7 14.500 9 13 11 C11 13 9 11 7.500 13 L6 16.500 C4.500 13.500 3 10.500 1 8 Z" fill="#85bcd4" stroke="#5693af" strokeWidth="0.800" />
                </Svg>
              </a>
              <a href="#plane" className="relative flex items-center gap-1.5 whitespace-nowrap text-[#333]">
                <PlaneIcon s={18} light />
                Surface-Plane1
              </a>
            </div>
            <p className="ml-[412px] mt-[45px] font-['Lato',sans-serif] text-[32px] font-bold leading-[44px] text-black">
              Surface by edges
            </p>
          </section>
        </div>
      </main>

      <div className="flex h-4 shrink-0 border-b border-t border-[#9a9a9a] bg-[#f7f7f7]">
        <div className="mr-6 w-0.5 bg-[#8fb3b8]" />
        <div className="flex w-[63px] border-t border-black bg-[#a9abae]">
          {["M3 1 V9 M9 1 L4 5 L9 9 Z", "M8 1 L3 5 L8 9 Z", "M3 1 L8 5 L3 9 Z", "M2 1 L7 5 L2 9 Z M9 1 V9"].map((d, i) => (
            <button
              type="button"
              key={d}
              aria-label={["First", "Previous", "Next", "Last"][i] + " tab"}
              className="flex flex-1 items-center justify-center border-r border-[#8a8c8f]"
            >
              <svg width="11" height="10" viewBox="0 0 11 10" aria-hidden="true">
                <path d={d} fill="#909295" stroke="#85878a" />
              </svg>
            </button>
          ))}
        </div>
        <button type="button" className="w-[55px] pl-1 text-center text-[12px] font-semibold leading-[13px]">Model</button>
        <button type="button" className="w-[106px] border-x border-[#9a9a9a] bg-[#d3d3d3] pr-1.5 text-center leading-[13px]">
          Motion Study 1
        </button>
      </div>
      <footer className="h-3.5 shrink-0 pl-0.5 leading-[14px]">Part3</footer>
    </div>
  );
}
